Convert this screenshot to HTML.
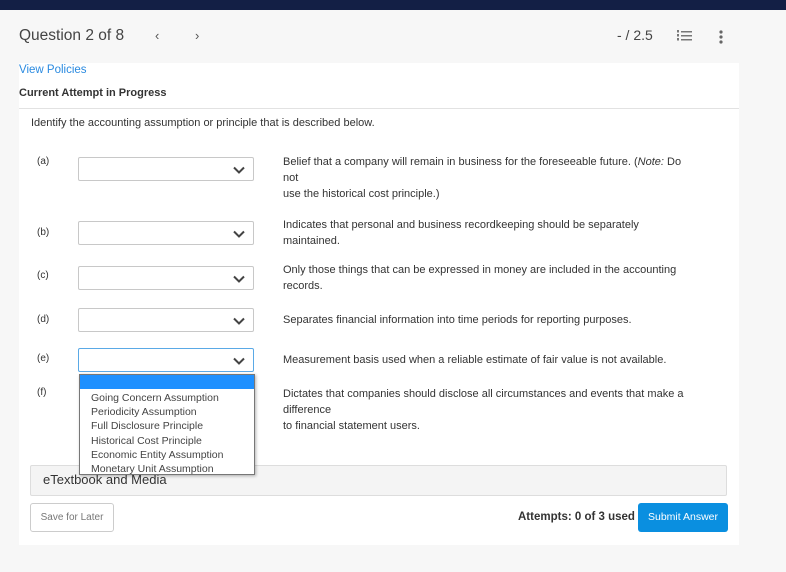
<!DOCTYPE html>
<html><head><style>
*{margin:0;padding:0;box-sizing:border-box}
body{width:786px;height:572px;background:#f7f7f7;font-family:"Liberation Sans",sans-serif;position:relative;overflow:hidden;color:#333}
.abs{position:absolute}
.top{left:0;top:0;width:786px;height:10px;background:#131f45}
.card{left:19px;top:63px;width:720px;height:482px;background:#fff}
.sel{position:absolute;left:78px;width:176px;height:24px;border:1px solid #c8c8c8;border-radius:2px;background:#fff}
.sel svg{position:absolute;right:8px;top:8px}
.lab{position:absolute;left:37px;font-size:10px;color:#333}
.txt{position:absolute;left:283px;width:440px;font-size:11px;line-height:16px;color:#333}
.dd{left:79px;top:374px;width:176px;height:101px;background:#fff;border:1px solid #777;box-shadow:1px 1px 3px rgba(0,0,0,.3);overflow:hidden}
.dd div{font-size:10.5px;line-height:14.2px;padding-left:11px;color:#444}
</style></head><body>
<div class="abs top"></div>
<div class="abs" style="left:19px;top:27px;font-size:15.5px;color:#444">Question 2 of 8</div>
<div class="abs" style="left:155px;top:28px;font-size:13px;color:#555">&lsaquo;</div>
<div class="abs" style="left:195px;top:28px;font-size:13px;color:#555">&rsaquo;</div>
<div class="abs" style="left:617px;top:27px;font-size:14px;color:#444">- / 2.5</div>
<svg class="abs" style="left:676px;top:29px" width="16" height="14"><g fill="#777"><rect x="5" y="2" width="11" height="1.5"/><rect x="5" y="6" width="11" height="1.5"/><rect x="5" y="10" width="11" height="1.5"/><rect x="1" y="1" width="2" height="2.5"/><rect x="1" y="5" width="2" height="2.5"/><rect x="1" y="9" width="2" height="2.5"/></g></svg>
<svg class="abs" style="left:718px;top:29px" width="6" height="16"><g fill="#666"><circle cx="3" cy="3" r="1.6"/><circle cx="3" cy="8" r="1.6"/><circle cx="3" cy="13" r="1.6"/></g></svg>
<div class="abs card"></div>
<div class="abs" style="left:19px;top:64px;font-size:11.5px;color:#2a8ae0">View Policies</div>
<div class="abs" style="left:19px;top:87px;font-size:11px;font-weight:bold;color:#333">Current Attempt in Progress</div>
<div class="abs" style="left:19px;top:108px;width:720px;height:1px;background:#e2e2e2"></div>
<div class="abs" style="left:31px;top:117px;font-size:11px;color:#333">Identify the accounting assumption or principle that is described below.</div>

<div class="lab" style="top:156px">(a)</div>
<div class="sel" style="top:157px"><svg width="12" height="8"><path d="M1 1.5L6 6.5L11 1.5" stroke="#444" stroke-width="2" fill="none"/></svg></div>
<div class="txt" style="top:154px">Belief that a company will remain in business for the foreseeable future. (<i>Note:</i> Do<br>not<br>use the historical cost principle.)</div>

<div class="lab" style="top:227px">(b)</div>
<div class="sel" style="top:221px"><svg width="12" height="8"><path d="M1 1.5L6 6.5L11 1.5" stroke="#444" stroke-width="2" fill="none"/></svg></div>
<div class="txt" style="top:217px">Indicates that personal and business recordkeeping should be separately<br>maintained.</div>

<div class="lab" style="top:270px">(c)</div>
<div class="sel" style="top:266px"><svg width="12" height="8"><path d="M1 1.5L6 6.5L11 1.5" stroke="#444" stroke-width="2" fill="none"/></svg></div>
<div class="txt" style="top:262px">Only those things that can be expressed in money are included in the accounting<br>records.</div>

<div class="lab" style="top:314px">(d)</div>
<div class="sel" style="top:308px"><svg width="12" height="8"><path d="M1 1.5L6 6.5L11 1.5" stroke="#444" stroke-width="2" fill="none"/></svg></div>
<div class="txt" style="top:312px">Separates financial information into time periods for reporting purposes.</div>

<div class="lab" style="top:353px">(e)</div>
<div class="sel" style="top:348px;border-color:#5aa9e6"><svg width="12" height="8"><path d="M1 1.5L6 6.5L11 1.5" stroke="#444" stroke-width="2" fill="none"/></svg></div>
<div class="txt" style="top:352px">Measurement basis used when a reliable estimate of fair value is not available.</div>

<div class="lab" style="top:387px">(f)</div>
<div class="txt" style="top:386px">Dictates that companies should disclose all circumstances and events that make a<br>difference<br>to financial statement users.</div>

<div class="abs" style="left:30px;top:465px;width:697px;height:31px;background:#f4f4f4;border:1px solid #ddd;border-radius:2px"></div>
<div class="abs" style="left:43px;top:472px;font-size:13px;color:#333">eTextbook and Media</div>

<div class="abs dd">
<div style="background:#1e90ff;height:14px"></div>
<div style="margin-top:2px">Going Concern Assumption</div>
<div>Periodicity Assumption</div>
<div>Full Disclosure Principle</div>
<div>Historical Cost Principle</div>
<div>Economic Entity Assumption</div>
<div>Monetary Unit Assumption</div>
</div>

<div class="abs" style="left:30px;top:503px;width:84px;height:29px;border:1px solid #ccc;border-radius:3px;font-size:10px;color:#777;text-align:center;line-height:27px">Save for Later</div>
<div class="abs" style="left:518px;top:511px;font-size:11.5px;font-weight:bold;color:#333">Attempts: 0 of 3 used</div>
<div class="abs" style="left:638px;top:503px;width:90px;height:29px;background:#0a8fe0;border-radius:3px;font-size:10.5px;color:#fff;text-align:center;line-height:29px">Submit Answer</div>
</body></html>
